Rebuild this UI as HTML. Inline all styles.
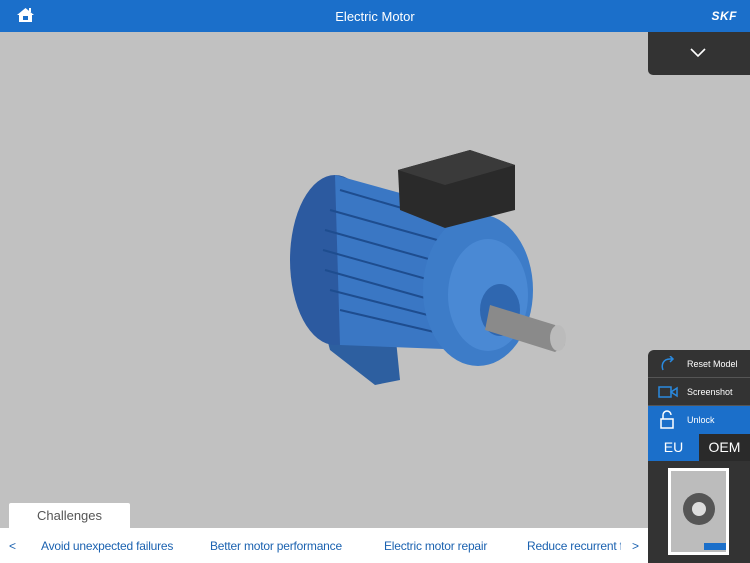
<!DOCTYPE html><html><head><style>
body{margin:0;width:750px;height:563px;overflow:hidden;background:#c1c1c1;font-family:"Liberation Sans",sans-serif;position:relative}
.hdr{position:absolute;left:0;top:0;width:750px;height:32px;background:#1b6fca}
.hdr .t{position:absolute;left:0;right:0;top:9px;text-align:center;color:#fff;font-size:13px}
.skf{position:absolute;right:13px;top:9px;color:#fff;font-weight:bold;font-size:12px;font-style:italic;letter-spacing:0.5px}
.dd{position:absolute;left:648px;top:32px;width:102px;height:43px;background:#333;border-bottom-left-radius:5px}
.panel{position:absolute;left:648px;top:350px;width:102px;height:213px;background:#333;border-top-left-radius:6px}
.row{position:absolute;left:0;width:102px;height:27px;border-bottom:1px solid #555;color:#fff;font-size:9px}
.row span{position:absolute;left:39px;top:9px}
.tab{position:absolute;left:9px;top:503px;width:121px;height:25px;background:#fff;border-radius:2px 2px 0 0;color:#555;font-size:13px;text-align:center;line-height:25px}
.bar{position:absolute;left:0;top:528px;width:648px;height:35px;background:#fff;color:#1b62b0;font-size:12px;letter-spacing:-0.2px}
.bar span{position:absolute;top:11px;white-space:nowrap}
</style></head><body>
<div class="hdr">
<svg style="position:absolute;left:16px;top:7px" width="19" height="16" viewBox="0 0 19 16"><path d="M9.5 1 L1 8 L3 8 L3 15 L16 15 L16 8 L18 8 Z" fill="#fff"/><rect x="7" y="9" width="5" height="4" fill="#1b6fca"/><rect x="13" y="1" width="2" height="4" fill="#fff"/></svg>
<div class="t">Electric Motor</div><div class="skf">SKF</div></div>
<div class="dd"><svg style="position:absolute;left:42px;top:16px" width="16" height="10"><path d="M1 1 L8 8 L15 1" stroke="#fff" stroke-width="1.6" fill="none"/></svg></div>
<svg style="position:absolute;left:280px;top:145px" width="300" height="245" viewBox="280 145 300 245">
<path d="M322 320 L330 350 L375 385 L400 380 L395 330 Z" fill="#2d5fa0"/>
<ellipse cx="335" cy="260" rx="45" ry="85" fill="#2c5aa0"/>
<path d="M335 175 L480 215 L470 350 L340 345 Z" fill="#3a77c4"/>
<g stroke="#1e4d8f" stroke-width="2">
<line x1="340" y1="190" x2="460" y2="225"/><line x1="330" y1="210" x2="455" y2="245"/><line x1="325" y1="230" x2="450" y2="265"/><line x1="323" y1="250" x2="448" y2="285"/><line x1="325" y1="270" x2="450" y2="305"/><line x1="330" y1="290" x2="455" y2="322"/><line x1="340" y1="310" x2="460" y2="338"/></g>
<ellipse cx="478" cy="290" rx="55" ry="76" fill="#3d7cc8"/>
<ellipse cx="488" cy="295" rx="40" ry="56" fill="#4a89d4"/>
<ellipse cx="500" cy="310" rx="20" ry="26" fill="#2f67b0"/>
<path d="M398 170 L470 150 L515 165 L515 210 L445 228 L400 210 Z" fill="#2a2a2a"/>
<path d="M398 170 L470 150 L515 165 L445 185 Z" fill="#3a3a3a"/>
<path d="M490 305 L555 325 L565 345 L555 352 L485 330 Z" fill="#8a8a8a"/>
<ellipse cx="558" cy="338" rx="8" ry="13" fill="#bbb"/>
</svg>
<div class="panel">
<div class="row" style="top:0"><svg style="position:absolute;left:12px;top:6px" width="16" height="16"><path d="M3 14 C1 9 3 3 10 3 L13 3 M10 0 L13 3 L10 6" stroke="#2a8ae0" stroke-width="1.5" fill="none"/></svg><span>Reset Model</span></div>
<div class="row" style="top:28px"><svg style="position:absolute;left:10px;top:8px" width="20" height="12"><rect x="1" y="1" width="12" height="10" stroke="#2a8ae0" stroke-width="1.5" fill="none"/><path d="M13 6 L19 2 L19 10 Z" stroke="#2a8ae0" stroke-width="1.5" fill="none"/></svg><span>Screenshot</span></div>
<div class="row" style="top:56px;background:#1b6fca;border:none;height:28px"><svg style="position:absolute;left:12px;top:4px" width="14" height="20"><path d="M3 9 L3 5 A4 4 0 0 1 11 5" stroke="#fff" stroke-width="1.5" fill="none"/><rect x="1" y="9" width="12" height="9" stroke="#fff" stroke-width="1.5" fill="none"/></svg><span>Unlock</span></div>
<div style="position:absolute;top:84px;left:0;width:51px;height:27px;background:#1b6fca;color:#fff;font-size:14px;text-align:center;line-height:27px">EU</div>
<div style="position:absolute;top:84px;left:51px;width:51px;height:27px;background:#2a2a2a;color:#fff;font-size:14px;text-align:center;line-height:27px">OEM</div>
<div style="position:absolute;top:118px;left:20px;width:61px;height:87px;background:#fff"><div style="position:absolute;left:3px;top:3px;width:55px;height:81px;background:#bcbcbc"><div style="position:absolute;left:12px;top:22px;width:32px;height:32px;border-radius:50%;background:#555"></div><div style="position:absolute;left:21px;top:31px;width:14px;height:14px;border-radius:50%;background:#ddd"></div><div style="position:absolute;right:0;bottom:2px;width:22px;height:7px;background:#1b6fca"></div></div></div>
</div>
<div class="tab">Challenges</div>
<div class="bar"><span style="left:9px">&lt;</span><span style="left:41px">Avoid unexpected failures</span><span style="left:210px">Better motor performance</span><span style="left:384px">Electric motor repair</span><span style="left:527px;width:94px;overflow:hidden">Reduce recurrent failures</span><span style="left:632px">&gt;</span></div>
</body></html>
